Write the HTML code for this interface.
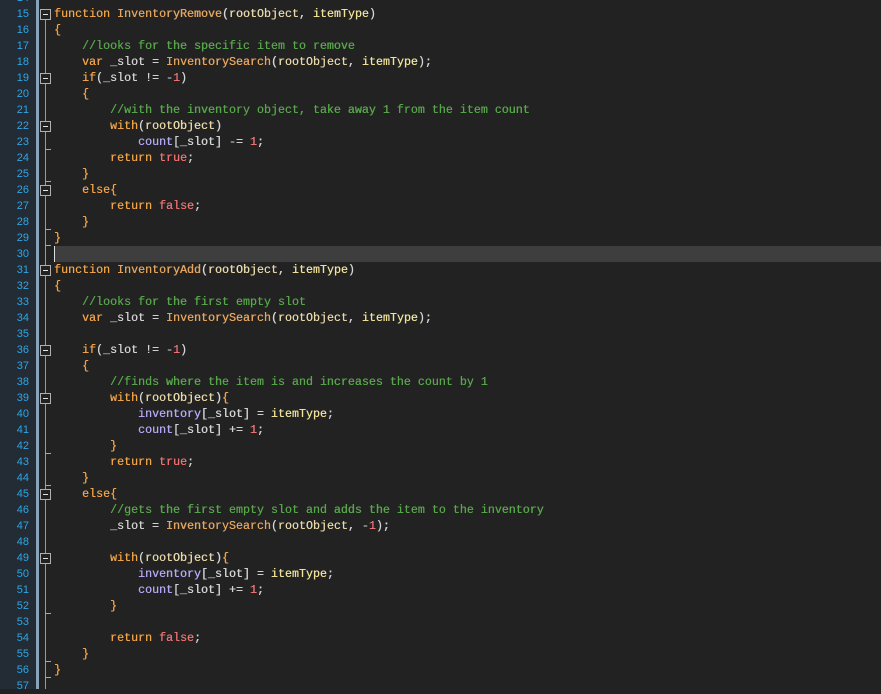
<!DOCTYPE html>
<html><head><meta charset="utf-8"><style>
body{margin:0;width:881px;height:689px;background:#222222;overflow:hidden;position:relative;font-family:"Liberation Mono",monospace;}
#gut{position:absolute;left:0;top:0;width:36px;height:689px;background:#232b35;}
#stripe{position:absolute;left:36px;top:0;width:3px;height:689px;background:#8aa3bd;}
.n{position:absolute;left:0;width:29px;text-align:right;color:#2ea6e3;font-size:11px;line-height:16px;font-family:"Liberation Sans",sans-serif;}
.l{position:absolute;left:54px;white-space:pre;font-size:11.67px;line-height:16px;color:#d4d4d4;text-shadow:0.3px 0 0 currentColor;}
.k{color:#f3a447}.f{color:#e6a55f}.c{color:#57a64a}.r{color:#f07272}.p{color:#b3a9f4}.y{color:#f0e39a}.o{color:#e6d7a8}
.box{position:absolute;left:40px;width:9px;height:9px;border:1px solid #b0b0b0;background:#222;}
.box:after{content:"";position:absolute;left:2px;top:4px;width:5px;height:1px;background:#e0e0e0;}
.tick{position:absolute;left:45px;width:6px;height:1px;background:#aaa;}
#vl{position:absolute;left:45px;top:14px;width:1px;height:675px;background:#9a9a9a;}
#hl{position:absolute;left:54px;top:246px;width:827px;height:16px;background:#3e3e3e;}
#caret{position:absolute;left:54px;top:246px;width:1px;height:16px;background:#ddd;}
</style></head><body>
<div id="gut"></div><div id="stripe"></div>
<div id="hl"></div><div id="caret"></div>
<div id="vl"></div>
<div class="n" style="top:-10px">14</div><div class="n" style="top:6px">15</div><div class="n" style="top:22px">16</div><div class="n" style="top:38px">17</div><div class="n" style="top:54px">18</div><div class="n" style="top:70px">19</div><div class="n" style="top:86px">20</div><div class="n" style="top:102px">21</div><div class="n" style="top:118px">22</div><div class="n" style="top:134px">23</div><div class="n" style="top:150px">24</div><div class="n" style="top:166px">25</div><div class="n" style="top:182px">26</div><div class="n" style="top:198px">27</div><div class="n" style="top:214px">28</div><div class="n" style="top:230px">29</div><div class="n" style="top:246px">30</div><div class="n" style="top:262px">31</div><div class="n" style="top:278px">32</div><div class="n" style="top:294px">33</div><div class="n" style="top:310px">34</div><div class="n" style="top:326px">35</div><div class="n" style="top:342px">36</div><div class="n" style="top:358px">37</div><div class="n" style="top:374px">38</div><div class="n" style="top:390px">39</div><div class="n" style="top:406px">40</div><div class="n" style="top:422px">41</div><div class="n" style="top:438px">42</div><div class="n" style="top:454px">43</div><div class="n" style="top:470px">44</div><div class="n" style="top:486px">45</div><div class="n" style="top:502px">46</div><div class="n" style="top:518px">47</div><div class="n" style="top:534px">48</div><div class="n" style="top:550px">49</div><div class="n" style="top:566px">50</div><div class="n" style="top:582px">51</div><div class="n" style="top:598px">52</div><div class="n" style="top:614px">53</div><div class="n" style="top:630px">54</div><div class="n" style="top:646px">55</div><div class="n" style="top:662px">56</div><div class="n" style="top:678px">57</div>

<div class="box" style="top:9px"></div><div class="box" style="top:73px"></div><div class="box" style="top:121px"></div><div class="box" style="top:185px"></div><div class="box" style="top:265px"></div><div class="box" style="top:345px"></div><div class="box" style="top:393px"></div><div class="box" style="top:489px"></div><div class="box" style="top:553px"></div>
<div class="tick" style="top:149px"></div><div class="tick" style="top:181px"></div><div class="tick" style="top:229px"></div><div class="tick" style="top:245px"></div><div class="tick" style="top:453px"></div><div class="tick" style="top:485px"></div><div class="tick" style="top:613px"></div><div class="tick" style="top:661px"></div><div class="tick" style="top:677px"></div>

<div class="l" style="top:6px"><span class="k">function</span> <span class="f">InventoryRemove</span>(<span class="o">rootObject</span>, <span class="y">itemType</span>)</div>
<div class="l" style="top:22px"><span class="k">{</span></div>
<div class="l" style="top:38px">    <span class="c">//looks for the specific item to remove</span></div>
<div class="l" style="top:54px">    <span class="k">var</span> _slot = <span class="f">InventorySearch</span>(<span class="o">rootObject</span>, <span class="y">itemType</span>);</div>
<div class="l" style="top:70px">    <span class="k">if</span>(_slot != -<span class="r">1</span>)</div>
<div class="l" style="top:86px">    <span class="k">{</span></div>
<div class="l" style="top:102px">        <span class="c">//with the inventory object, take away 1 from the item count</span></div>
<div class="l" style="top:118px">        <span class="k">with</span>(<span class="o">rootObject</span>)</div>
<div class="l" style="top:134px">            <span class="p">count</span>[_slot] -= <span class="r">1</span>;</div>
<div class="l" style="top:150px">        <span class="k">return</span> <span class="r">true</span>;</div>
<div class="l" style="top:166px">    <span class="k">}</span></div>
<div class="l" style="top:182px">    <span class="k">else{</span></div>
<div class="l" style="top:198px">        <span class="k">return</span> <span class="r">false</span>;</div>
<div class="l" style="top:214px">    <span class="k">}</span></div>
<div class="l" style="top:230px"><span class="k">}</span></div>
<div class="l" style="top:262px"><span class="k">function</span> <span class="f">InventoryAdd</span>(<span class="o">rootObject</span>, <span class="y">itemType</span>)</div>
<div class="l" style="top:278px"><span class="k">{</span></div>
<div class="l" style="top:294px">    <span class="c">//looks for the first empty slot</span></div>
<div class="l" style="top:310px">    <span class="k">var</span> _slot = <span class="f">InventorySearch</span>(<span class="o">rootObject</span>, <span class="y">itemType</span>);</div>
<div class="l" style="top:342px">    <span class="k">if</span>(_slot != -<span class="r">1</span>)</div>
<div class="l" style="top:358px">    <span class="k">{</span></div>
<div class="l" style="top:374px">        <span class="c">//finds where the item is and increases the count by 1</span></div>
<div class="l" style="top:390px">        <span class="k">with</span>(<span class="o">rootObject</span>)<span class="k">{</span></div>
<div class="l" style="top:406px">            <span class="p">inventory</span>[_slot] = <span class="y">itemType</span>;</div>
<div class="l" style="top:422px">            <span class="p">count</span>[_slot] += <span class="r">1</span>;</div>
<div class="l" style="top:438px">        <span class="k">}</span></div>
<div class="l" style="top:454px">        <span class="k">return</span> <span class="r">true</span>;</div>
<div class="l" style="top:470px">    <span class="k">}</span></div>
<div class="l" style="top:486px">    <span class="k">else{</span></div>
<div class="l" style="top:502px">        <span class="c">//gets the first empty slot and adds the item to the inventory</span></div>
<div class="l" style="top:518px">        _slot = <span class="f">InventorySearch</span>(<span class="o">rootObject</span>, -<span class="r">1</span>);</div>
<div class="l" style="top:550px">        <span class="k">with</span>(<span class="o">rootObject</span>)<span class="k">{</span></div>
<div class="l" style="top:566px">            <span class="p">inventory</span>[_slot] = <span class="y">itemType</span>;</div>
<div class="l" style="top:582px">            <span class="p">count</span>[_slot] += <span class="r">1</span>;</div>
<div class="l" style="top:598px">        <span class="k">}</span></div>
<div class="l" style="top:630px">        <span class="k">return</span> <span class="r">false</span>;</div>
<div class="l" style="top:646px">    <span class="k">}</span></div>
<div class="l" style="top:662px"><span class="k">}</span></div>
</body></html>
